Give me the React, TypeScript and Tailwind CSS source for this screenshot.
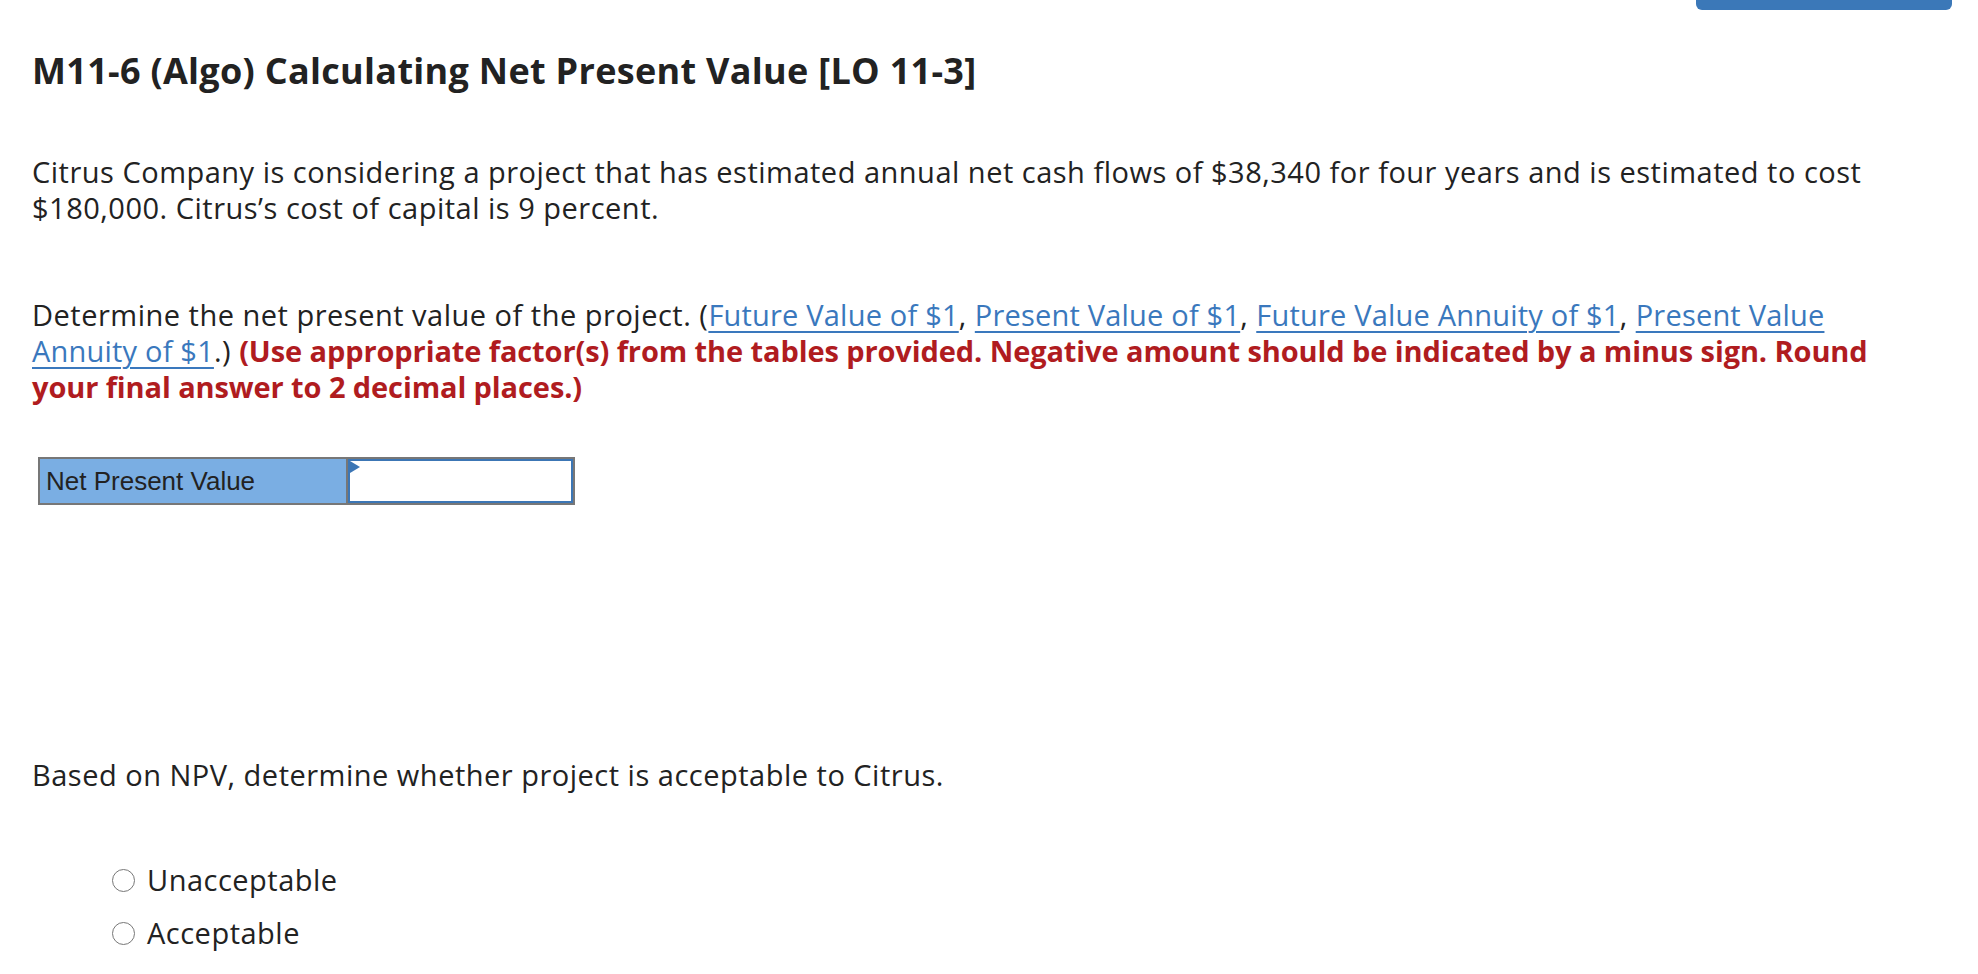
import React from "react";

const font = { fontFamily: "'Open Sans', Lato, sans-serif" };

function Radio({ label }: { label: string }) {
  return (
    <label className="flex items-center h-[40px] gap-[12px] text-[29px] tracking-[0.5px] text-[#222]">
      <span className="w-[23px] h-[23px] rounded-full border-[1.5px] border-[#777] bg-white inline-block" />
      <span>{label}</span>
    </label>
  );
}

export default function App() {
  const link = "text-[#3a78bd] underline underline-offset-[5px] decoration-[2px] tracking-[0.2px]";
  return (
    <div className="bg-white min-h-[974px] w-[1978px] text-[#222]" style={font}>
      <div className="flex justify-end pr-[26px] h-[10px]">
        <div className="w-[256px] h-[10px] bg-[#3b78b8] rounded-b-[6px]" />
      </div>
      <div className="px-[32px] w-[1946px]">
        <h1 className="mt-[37px] text-[36px] tracking-[0.3px] leading-[48px] font-bold text-[#222]">
          M11-6 (Algo) Calculating Net Present Value [LO 11-3]
        </h1>
        <p className="mt-[59px] text-[29px] tracking-[0.5px] leading-[36px]">
          Citrus Company is considering a project that has estimated annual net cash flows of $38,340 for four years and is estimated to cost $180,000. Citrus’s cost of capital is 9 percent.
        </p>
        <p className="mt-[71px] text-[29px] tracking-[0.5px] leading-[36px]">
          Determine the net present value of the project. (
          <a className={link}>Future Value of $1</a>,{" "}
          <a className={link}>Present Value of $1</a>,{" "}
          <a className={link}>Future Value Annuity of $1</a>,{" "}
          <a className={link}>Present Value Annuity of $1</a>.){" "}
          <span className="font-bold text-[#b01c1f] tracking-[-0.1px]">
            (Use appropriate factor(s) from the tables provided. Negative amount should be indicated by a minus sign. Round your final answer to 2 decimal places.)
          </span>
        </p>
        <div className="mt-[52px] ml-[6px] flex w-[537px] h-[48px] border-2 border-[#777]">
          <div
            className="w-[308px] h-full bg-[#7aaee3] border-r-2 border-[#777] flex items-center pl-[6px] text-[26px] text-[#222]"
            style={{ fontFamily: "'Liberation Sans', Arial, sans-serif" }}
          >
            Net Present Value
          </div>
          <div className="relative flex-1 h-full border-2 border-[#3c76b5] bg-white">
            <svg className="absolute left-0 top-0" width="10" height="12" viewBox="0 0 10 12">
              <polygon points="0,0 10,6 0,12" fill="#3c76b5" />
            </svg>
          </div>
        </div>
        <p className="mt-[252px] text-[29px] tracking-[0.5px] leading-[36px]">
          Based on NPV, determine whether project is acceptable to Citrus.
        </p>
        <div className="mt-[67px] ml-[80px] flex flex-col gap-[13px]">
          <Radio label="Unacceptable" />
          <Radio label="Acceptable" />
        </div>
      </div>
    </div>
  );
}
